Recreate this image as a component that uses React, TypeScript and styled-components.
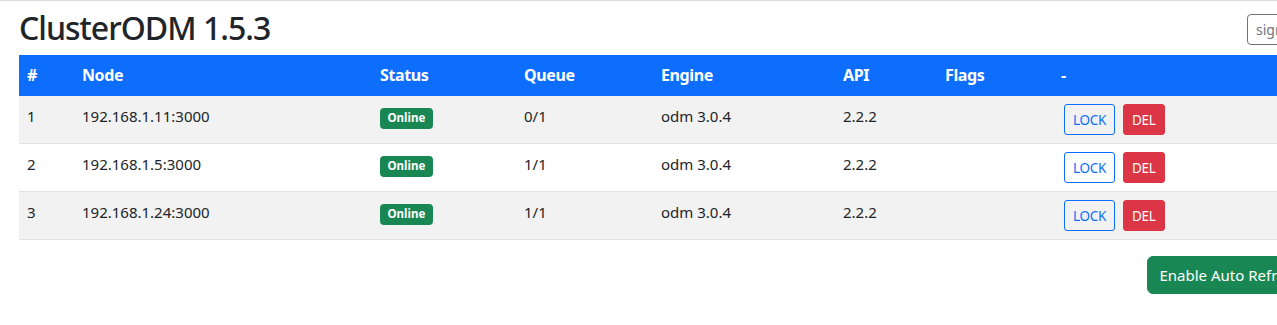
import React from "react";
import styled, { createGlobalStyle } from "styled-components";

const GlobalStyle = createGlobalStyle`
  html, body {
    margin: 0;
    overflow: hidden;
  }
  body {
    font-family: "Noto Sans", "Open Sans", Arial, sans-serif;
    font-size: 16px;
    line-height: 1.5;
    color: #212529;
    background: #fff;
    border-top: 1px solid #dedede;
  }
`;

const Page = styled.div`
  width: 1304px;
  margin-left: 19px;
`;

const TopBar = styled.div`
  display: flex;
  justify-content: space-between;
  align-items: flex-start;
`;

const Title = styled.h2`
  margin: 8px 0 8px;
  font-size: 32px;
  font-weight: 500;
  line-height: 1.2;
  letter-spacing: -1px;
`;

const SearchInput = styled.input`
  margin-top: 13px;
  width: 76px;
  height: 31px;
  box-sizing: border-box;
  padding: 4px 8px;
  font-family: inherit;
  font-size: 14px;
  color: #212529;
  border: 1px solid #6c757d;
  border-radius: 4px;
  outline: none;
  &::placeholder {
    color: #6c757d;
  }
`;

const Table = styled.table`
  width: 100%;
  table-layout: fixed;
  border-collapse: collapse;
  vertical-align: top;
`;

const HeadRow = styled.tr`
  background: #0d6efd;
`;

const HeadCell = styled.th`
  padding: 8px;
  text-align: left;
  font-weight: 700;
  letter-spacing: -0.4px;
  color: #fff;
  border-bottom: 1px solid #0d6efd;
`;

const Row = styled.tr<{ $striped: boolean }>`
  background: ${(p) => (p.$striped ? "#f2f2f2" : "#fff")};
`;

const Cell = styled.td`
  padding: 8px;
  font-size: 15px;
  line-height: 24px;
  border-bottom: 1px solid #dee2e6;
  vertical-align: top;
`;

const Badge = styled.span`
  display: inline-block;
  padding: 4.5px 7.5px;
  font-size: 11.5px;
  font-weight: 700;
  line-height: 12px;
  color: #fff;
  background: #198754;
  border-radius: 4px;
`;

const Actions = styled.div`
  display: flex;
  gap: 8px;
  padding-left: 3px;
`;

const SmallButton = styled.button<{ $variant: "lock" | "del" }>`
  height: 31px;
  padding: 4px 8px;
  font-family: inherit;
  font-size: 13.5px;
  line-height: 1.5;
  letter-spacing: -0.3px;
  border-radius: 3px;
  border: 1px solid ${(p) => (p.$variant === "lock" ? "#0d6efd" : "#dc3545")};
  color: ${(p) => (p.$variant === "lock" ? "#0d6efd" : "#fff")};
  background: ${(p) => (p.$variant === "lock" ? "transparent" : "#dc3545")};
`;

const Footer = styled.div`
  display: flex;
  justify-content: flex-end;
  margin-top: 16px;
  padding-right: 8px;
`;

const RefreshButton = styled.button`
  height: 38px;
  padding: 6px 12px;
  font-family: inherit;
  font-size: 15px;
  line-height: 24px;
  color: #fff;
  background: #198754;
  border: 1px solid #198754;
  border-radius: 6px;
`;

const columns = [
  { label: "#", width: 55 },
  { label: "Node", width: 298 },
  { label: "Status", width: 144 },
  { label: "Queue", width: 137 },
  { label: "Engine", width: 182 },
  { label: "API", width: 102 },
  { label: "Flags", width: 116 },
  { label: "-", width: undefined },
];

const nodes = [
  { id: 1, host: "192.168.1.11:3000", queue: "0/1", engine: "odm 3.0.4", api: "2.2.2" },
  { id: 2, host: "192.168.1.5:3000", queue: "1/1", engine: "odm 3.0.4", api: "2.2.2" },
  { id: 3, host: "192.168.1.24:3000", queue: "1/1", engine: "odm 3.0.4", api: "2.2.2" },
];

export default function App() {
  return (
    <>
      <GlobalStyle />
      <Page>
        <TopBar>
          <Title>ClusterODM 1.5.3</Title>
          <SearchInput placeholder="signature" />
        </TopBar>
        <Table>
          <colgroup>
            {columns.map((c, i) => (
              <col key={i} style={c.width ? { width: c.width } : undefined} />
            ))}
          </colgroup>
          <thead>
            <HeadRow>
              {columns.map((c, i) => (
                <HeadCell key={i}>{c.label}</HeadCell>
              ))}
            </HeadRow>
          </thead>
          <tbody>
            {nodes.map((n, i) => (
              <Row key={n.id} $striped={i % 2 === 0}>
                <Cell>{n.id}</Cell>
                <Cell>{n.host}</Cell>
                <Cell>
                  <Badge>Online</Badge>
                </Cell>
                <Cell>{n.queue}</Cell>
                <Cell>{n.engine}</Cell>
                <Cell>{n.api}</Cell>
                <Cell></Cell>
                <Cell>
                  <Actions>
                    <SmallButton $variant="lock">LOCK</SmallButton>
                    <SmallButton $variant="del">DEL</SmallButton>
                  </Actions>
                </Cell>
              </Row>
            ))}
          </tbody>
        </Table>
        <Footer>
          <RefreshButton>Enable Auto Refresh</RefreshButton>
        </Footer>
      </Page>
    </>
  );
}
